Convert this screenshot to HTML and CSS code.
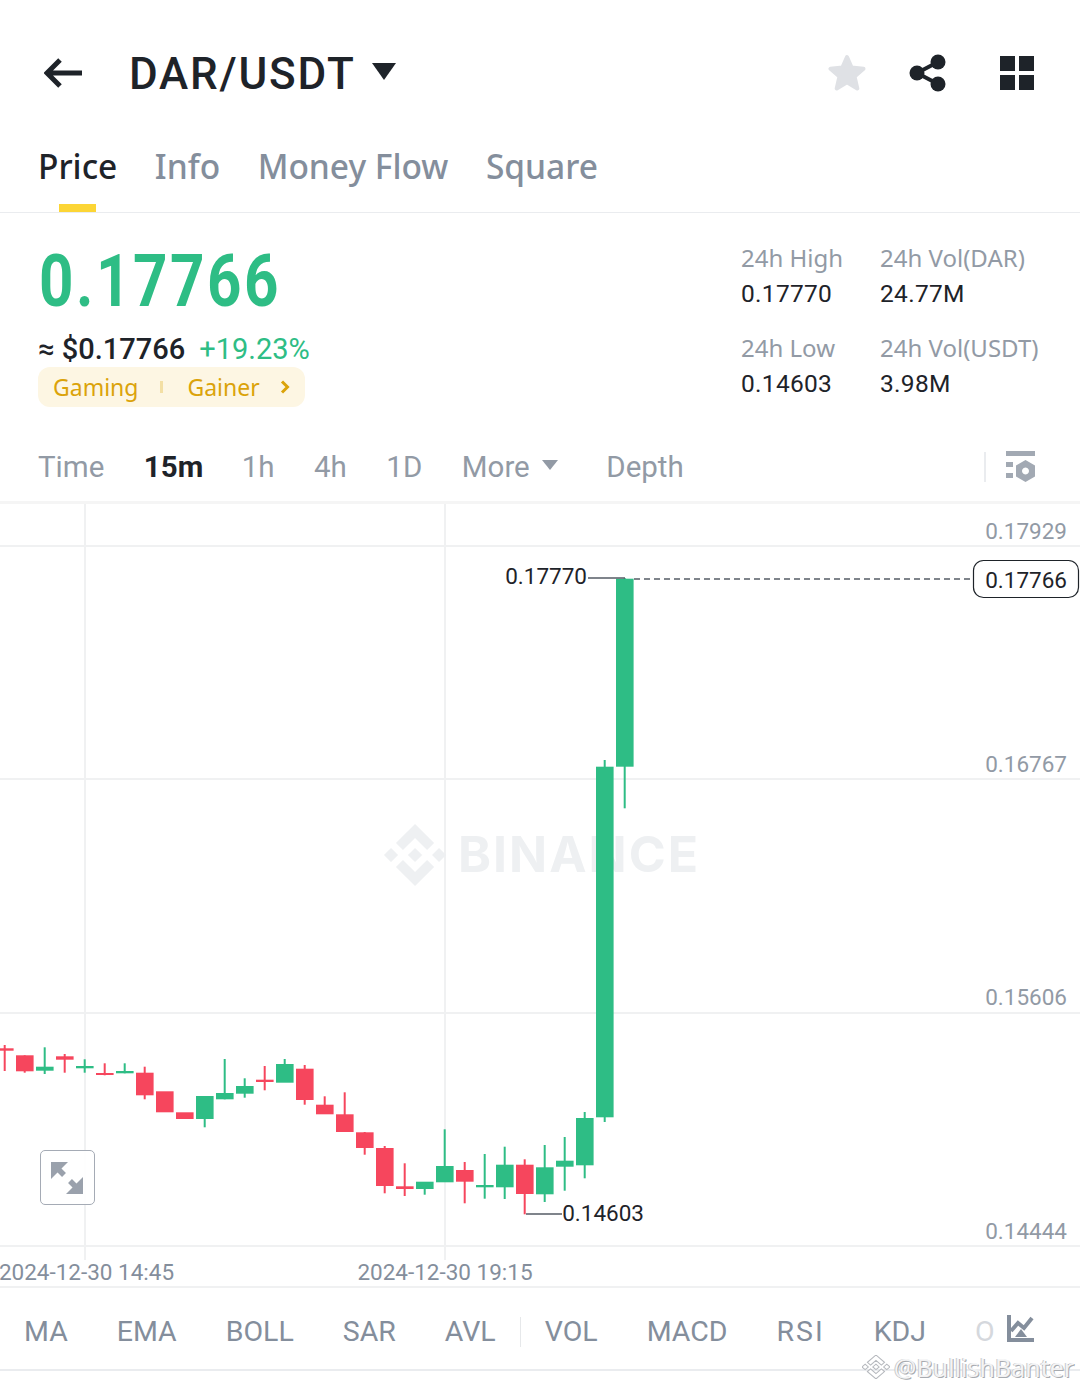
FILE: index.html

```html
<!DOCTYPE html>
<html lang="en">
<head>
  <meta charset="UTF-8" />
  <meta name="viewport" content="width=device-width, initial-scale=1.0"/>
  <title>DAR/USDT</title>
  <link rel="stylesheet" href="styles.css">
</head>
<body>

  <header class="topbar">
    <svg class="back-icon" width="38" height="30" viewBox="0 0 38 30"><path d="M16 2 L3 15 L16 28 M3 15 H38" /></svg>
    <h1 class="pair">DAR/USDT</h1>
    <span class="pair-caret"></span>
    <div class="topbar-actions">
      <svg width="38" height="38" viewBox="0 0 38 38"><path class="star" d="M19 3 L23.6 13.6 L35.5 14.8 L26.6 22.6 L29.3 34.5 L19 28.2 L8.7 34.5 L11.4 22.6 L2.5 14.8 L14.4 13.6 Z"/></svg>
      <svg width="38" height="40" viewBox="0 0 38 40" class="dark-icon share-icon"><path d="M29 9 L8 20 L29 31" fill="none" stroke="#1e2329" stroke-width="4"/><circle cx="29" cy="9" r="7.5"/><circle cx="8" cy="20" r="7.5"/><circle cx="29" cy="31" r="7.5"/></svg>
      <svg width="34" height="34" viewBox="0 0 34 34" class="dark-icon"><rect width="15" height="15"/><rect x="19" width="15" height="15"/><rect y="19" width="15" height="15"/><rect x="19" y="19" width="15" height="15"/></svg>
    </div>
  </header>

  <nav class="tabs">
    <a class="tab active">Price</a>
    <a class="tab">Info</a>
    <a class="tab">Money Flow</a>
    <a class="tab">Square</a>
  </nav>

  <section class="summary">
    <div class="summary-left">
      <div class="last-price">0.17766</div>
      <div class="sub-price">
        <span class="fiat">≈ $0.17766</span>
        <span class="change">+19.23%</span>
      </div>
      <div class="tags">
        <span>Gaming</span>
        <i class="tag-sep"></i>
        <span>Gainer</span>
        <svg width="10" height="14" viewBox="0 0 10 14"><path d="M2 1.5 L7.5 7 L2 12.5" fill="none" stroke="#dba30a" stroke-width="3"/></svg>
      </div>
    </div>
    <div class="stats">
      <div class="stat"><label>24h High</label><b>0.17770</b></div>
      <div class="stat"><label>24h Vol(DAR)</label><b>24.77M</b></div>
      <div class="stat"><label>24h Low</label><b>0.14603</b></div>
      <div class="stat"><label>24h Vol(USDT)</label><b>3.98M</b></div>
    </div>
  </section>

  <div class="intervals">
    <a>Time</a>
    <a class="current">15m</a>
    <a>1h</a>
    <a>4h</a>
    <a>1D</a>
    <a class="more">More<span class="more-caret"></span></a>
    <a class="depth">Depth</a>
    <i class="interval-sep"></i>
    <svg class="settings-icon" width="30" height="32" viewBox="0 0 30 32"><path d="M1 0h29v5H1zM1 11h7v5H1zM1 22h7v5H1z"/><path fill-rule="evenodd" d="M20.500 9 L30 14.500 V25.500 L20.500 31 L11 25.500 V14.500 Z M20.500 16.500 a3.500 3.500 0 1 0 .01 0 Z"/></svg>
  </div>

  <div class="chart">
    <!-- viewBox follows page coordinates, so candle y values read straight off the screen -->
    <svg class="chart-svg" width="1080" height="782" viewBox="0 504 1080 782">
      <g class="grid">
        <path d="M85 504V1260M445 504V1260M0 546H1080M0 779H1080M0 1013H1080M0 1246H1080"/>
      </g>

      <g class="watermark">
        <path transform="translate(384 824) scale(.49)" d="M38.730 53.200l24.590-24.580 24.600 24.600 14.300-14.310L63.320 0 24.430 38.900zM0 63.310l14.300-14.310 14.310 14.300-14.310 14.320zM38.730 73.410L63.320 98l24.600-24.600 14.310 14.290-38.900 38.910-38.910-38.880-.02-.02zM98 63.310l14.300-14.310 14.310 14.300-14.310 14.320zM77.830 63.300L63.320 48.780 52.590 59.510l-1.240 1.230-2.540 2.540 14.510 14.500 14.510-14.470z"/>
        <text x="458" y="872" class="watermark-text">BINANCE</text>
      </g>

      <g class="down">
        <rect x="3.700" y="1045" width="2" height="26"/><rect x="-4" y="1048.300" width="17.600" height="2.400"/>
        <rect x="23.700" y="1055.300" width="2" height="17.400"/><rect x="16" y="1055.300" width="17.600" height="16"/>
        <rect x="63.700" y="1054" width="2" height="18.700"/><rect x="56" y="1056.300" width="17.600" height="3.400"/>
        <rect x="103.700" y="1063.300" width="2" height="12"/><rect x="96" y="1073" width="17.600" height="2"/>
        <rect x="143.700" y="1066.700" width="2" height="32.600"/><rect x="136" y="1072.700" width="17.600" height="22.600"/>
        <rect x="156" y="1091.300" width="17.600" height="21"/>
        <rect x="176" y="1112.300" width="17.600" height="6.700"/>
        <rect x="263.700" y="1066" width="2" height="24.300"/><rect x="256" y="1079.700" width="17.600" height="2.300"/>
        <rect x="303.700" y="1065" width="2" height="39.700"/><rect x="296" y="1068.700" width="17.600" height="31.300"/>
        <rect x="323.700" y="1096.300" width="2" height="10"/><rect x="316" y="1104.700" width="17.600" height="9.600"/>
        <rect x="343.700" y="1092.300" width="2" height="24"/><rect x="336" y="1114.300" width="17.600" height="17.700"/>
        <rect x="363.700" y="1132" width="2" height="22.700"/><rect x="356" y="1132.300" width="17.600" height="15.700"/>
        <rect x="383.700" y="1146" width="2" height="47.300"/><rect x="376" y="1148" width="17.600" height="38"/>
        <rect x="403.700" y="1163.300" width="2" height="32.700"/><rect x="396" y="1186.300" width="17.600" height="2.700"/>
        <rect x="463.700" y="1162" width="2" height="41.300"/><rect x="456" y="1170" width="17.600" height="11.700"/>
        <rect x="523.700" y="1159.300" width="2" height="55"/><rect x="516" y="1164.700" width="17.600" height="29.300"/>
      </g>
      <g class="up">
        <rect x="43.700" y="1047.300" width="2" height="26.700"/><rect x="36" y="1066.700" width="17.600" height="4"/>
        <rect x="83.700" y="1059.300" width="2" height="13.400"/><rect x="76" y="1066" width="17.600" height="2.300"/>
        <rect x="123.700" y="1063.300" width="2" height="10"/><rect x="116" y="1071" width="17.600" height="2.300"/>
        <rect x="203.700" y="1096" width="2" height="31.300"/><rect x="196" y="1096" width="17.600" height="23"/>
        <rect x="223.700" y="1059" width="2" height="40.300"/><rect x="216" y="1093" width="17.600" height="6.300"/>
        <rect x="243.700" y="1078.300" width="2" height="19.400"/><rect x="236" y="1086" width="17.600" height="7.700"/>
        <rect x="283.700" y="1059" width="2" height="10"/><rect x="276" y="1064" width="17.600" height="18.700"/>
        <rect x="423.700" y="1182" width="2" height="12.700"/><rect x="416" y="1181.700" width="17.600" height="7.300"/>
        <rect x="443.700" y="1129.300" width="2" height="40"/><rect x="436" y="1166" width="17.600" height="16.300"/>
        <rect x="483.700" y="1154" width="2" height="44.700"/><rect x="476" y="1185" width="17.600" height="2.300"/>
        <rect x="503.700" y="1146.700" width="2" height="52.300"/><rect x="496" y="1164.700" width="17.600" height="22.600"/>
        <rect x="543.700" y="1145" width="2" height="57"/><rect x="536" y="1167.300" width="17.600" height="27"/>
        <rect x="563.700" y="1137" width="2" height="53.700"/><rect x="556" y="1160.700" width="17.600" height="6"/>
        <rect x="583.700" y="1112" width="2" height="66.300"/><rect x="576" y="1118" width="17.600" height="47.300"/>
        <rect x="603.700" y="760" width="2" height="362"/><rect x="596" y="766.700" width="17.600" height="350.600"/>
        <rect x="623.700" y="578" width="2" height="230.300"/><rect x="616" y="578.700" width="17.600" height="188"/>
      </g>

      <path class="marker" d="M588 578H625M526 1214H562"/>
      <path class="last-line" d="M634 579H970"/>
      <rect class="last-box" x="973.500" y="560.500" width="105" height="37" rx="10"/>

      <text class="axis" x="1067" y="539">0.17929</text>
      <text class="axis" x="1067" y="772">0.16767</text>
      <text class="axis" x="1067" y="1005">0.15606</text>
      <text class="axis" x="1067" y="1239">0.14444</text>
      <text class="axis dark" x="1067" y="588">0.17766</text>
      <text class="extreme" x="587" y="584">0.17770</text>
      <text class="extreme" x="644" y="1221">0.14603</text>
      <text class="date" x="86.500" y="1280">2024-12-30 14:45</text>
      <text class="date" x="445" y="1280">2024-12-30 19:15</text>
    </svg>

    <button class="expand">
      <svg width="53" height="53" viewBox="0 0 53 53"><path d="M10 11h17L10 28zM42 43H25l17-17z"/><path d="M15 16 L23 24 M29 30 L37 38" stroke="#9aa1ac" stroke-width="5.500"/></svg>
    </button>
  </div>

  <div class="indicators">
    <div class="indicator-list">
      <a>MA</a>
      <a>EMA</a>
      <a>BOLL</a>
      <a>SAR</a>
      <a class="last-main">AVL</a>
      <a>VOL</a>
      <a>MACD</a>
      <a class="rsi">RSI</a>
      <a>KDJ</a>
      <a class="faded">O</a>
    </div>
    <svg class="trend-icon" width="27" height="27" viewBox="0 0 27 27"><path d="M2 0V25H27" fill="none" stroke="#848e9c" stroke-width="4"/><path d="M4 16 L11 8 L17 13 L25 3" fill="none" stroke="#848e9c" stroke-width="4"/><path d="M8 22 L14 14 L20 22Z" fill="#848e9c"/></svg>
  </div>

  <div class="credit">
    <svg width="28" height="24" viewBox="0 0 127 127" preserveAspectRatio="none"><path d="M38.730 53.200l24.590-24.580 24.600 24.600 14.300-14.310L63.320 0 24.430 38.900zM0 63.310l14.300-14.310 14.310 14.300-14.310 14.320zM38.730 73.410L63.320 98l24.600-24.600 14.310 14.290-38.900 38.910-38.910-38.880-.02-.02zM98 63.310l14.300-14.310 14.310 14.300-14.310 14.320zM77.830 63.300L63.320 48.780 52.590 59.510l-1.240 1.230-2.540 2.540 14.510 14.500 14.510-14.470z"/></svg>
    <span>@BullishBanter</span>
  </div>

</body>
</html>
```

FILE: styles.css

```css
html, body {
  height: 1390px;
  overflow: hidden;
}

body {
  margin: 0;
  position: relative;
  background: #fff;
  color: #1e2329;
  font-family: "Noto Sans", sans-serif;
}

/* header */
.topbar {
  display: flex;
  align-items: center;
  height: 130px;
  padding: 16px 46px 0 44px;
  box-sizing: border-box;
}

.back-icon path {
  fill: none;
  stroke: #1e2329;
  stroke-width: 5;
}

.pair {
  margin: 2px 0 0 47px;
  font: 500 44px "Roboto", sans-serif;
  letter-spacing: 1.800px;
}

.pair-caret {
  margin: 0 0 3px 16px;
  border-left: 12.500px solid transparent;
  border-right: 12.500px solid transparent;
  border-top: 17px solid #1e2329;
}

.topbar-actions {
  display: flex;
  align-items: center;
  gap: 43px;
  margin-left: auto;
}

.share-icon { margin-right: 10px; }

.star {
  fill: #dfe1e5;
  stroke: #dfe1e5;
  stroke-width: 4;
  stroke-linejoin: round;
}

.dark-icon { fill: #1e2329; }

/* tabs */
.tabs {
  display: flex;
  gap: 37.500px;
  height: 83px;
  padding-left: 38px;
  box-sizing: border-box;
  border-bottom: 1px solid #eaecef;
}

.tab {
  position: relative;
  font-size: 33.500px;
  line-height: 72px;
  font-weight: 500;
  color: #848e9c;
}

.tab.active { color: #1e2329; }

.tab.active::after {
  content: "";
  position: absolute;
  left: 21px;
  bottom: 0;
  width: 37px;
  height: 8px;
  background: #fcd535;
}

/* price block */
.summary {
  display: flex;
  justify-content: space-between;
  height: 215px;
  padding: 0 39px 0 38px;
  box-sizing: border-box;
}

/* DIN-like narrow digits, no such face is installed */
.last-price {
  margin: 29px 0 0 1px;
  font: 700 72px/80px "Roboto", sans-serif;
  letter-spacing: 3px;
  color: #2ebd85;
  transform: scaleX(0.835);
  transform-origin: left center;
}

.sub-price {
  display: flex;
  gap: 14px;
  margin-top: 7px;
  font: 500 29px/40px "Roboto", sans-serif;
}

.change { color: #2ebd85; font-weight: 400; }

.tags {
  display: inline-flex;
  align-items: center;
  height: 40px;
  margin-top: -2px;
  padding: 0 15px;
  border-radius: 12px;
  background: #fdf6e3;
  color: #dba30a;
  font-size: 23px;
}

.tag-sep {
  width: 3px;
  height: 12px;
  margin: 0 24px 0 22px;
  background: #f3dfa4;
}

.tags svg { margin-left: 20px; }

.stats {
  display: grid;
  grid-template-columns: 139px 161px;
  align-content: start;
  row-gap: 19px;
  padding-top: 27px;
}

.stat label {
  display: block;
  font-size: 24px;
  line-height: 36px;
  color: #929aa5;
  white-space: nowrap;
}

.stat b {
  display: block;
  margin-top: 1px;
  font: 400 24.500px/34px "Roboto", sans-serif;
  letter-spacing: 0.300px;
}

/* interval row */
.intervals {
  display: flex;
  align-items: center;
  gap: 39.500px;
  height: 76px;
  padding: 2px 45px 0 38px;
  box-sizing: border-box;
  font: 400 29.500px "Roboto", sans-serif;
  color: #929aa5;
}

.current {
  margin-right: -1px;
  font-weight: 700;
  color: #1e2329;
}

.more {
  display: flex;
  align-items: center;
}

.more-caret {
  margin: 0 0 4px 12px;
  border-left: 8px solid transparent;
  border-right: 8px solid transparent;
  border-top: 10px solid #929aa5;
}

.depth { margin-left: 9px; }

.interval-sep {
  width: 2px;
  height: 30px;
  margin-left: auto;
  margin-right: -20px;
  background: #eaecef;
}

.settings-icon { fill: #a2a9b3; }

/* chart */
.chart {
  height: 782px;
  border-top: 3px solid #f5f5f5;
  margin-top: -3px;
  position: relative;
}

.chart-svg { display: block; }

.grid path {
  stroke: #f0f1f2;
  stroke-width: 2;
  fill: none;
}

.watermark { fill: #eef0f2; }

.watermark-text {
  font: 700 50px "Inter", sans-serif;
  letter-spacing: 2px;
}

.up rect { fill: #2ebd85; }
.down rect { fill: #f6465d; }

.marker {
  stroke: #555c66;
  stroke-width: 1.5;
  fill: none;
}

.last-line {
  stroke: #555c66;
  stroke-width: 1.5;
  stroke-dasharray: 6 4;
}

.last-box {
  fill: #fff;
  stroke: #1e2329;
  stroke-width: 1.2;
}

.axis {
  font: 400 22.500px "Roboto", sans-serif;
  fill: #929aa5;
  text-anchor: end;
}

.axis.dark { fill: #1e2329; }

.extreme {
  font: 400 22.500px "Roboto", sans-serif;
  fill: #1e2329;
  text-anchor: end;
}

.date {
  font: 400 22.500px "Roboto", sans-serif;
  fill: #848e9c;
  text-anchor: middle;
}

.expand {
  position: absolute;
  left: 40px;
  top: 646px;
  width: 55px;
  height: 55px;
  padding: 0;
  border: 1.5px solid #a5abb5;
  border-radius: 5px;
  background: rgba(255, 255, 255, 0.9);
}

.expand svg {
  display: block;
  fill: #9aa1ac;
}

/* indicator row */
.indicators {
  position: relative;
  height: 85px;
  box-sizing: border-box;
  border-top: 2px solid #f0f1f2;
  border-bottom: 2px solid #eaecef;
}

.indicator-list {
  display: flex;
  align-items: center;
  gap: 49px;
  height: 81px;
  box-sizing: border-box;
  padding: 5px 0 0 24px;
  font: 400 28.500px "Roboto", sans-serif;
  color: #848e9c;
}

.last-main { position: relative; }

.last-main::after {
  content: "";
  position: absolute;
  right: -25px;
  top: 2px;
  width: 1px;
  height: 30px;
  background: #e6e8ea;
}

.rsi { letter-spacing: 2px; }

.faded { color: #d5d8dd; }

.trend-icon {
  position: absolute;
  left: 1007px;
  top: 27px;
}

/* image credit stamped on the screenshot */
.credit {
  position: absolute;
  left: 862px;
  top: 1352px;
  display: flex;
  align-items: center;
  gap: 4px;
}

.credit svg {
  fill: #fff;
  stroke: #b5b8bd;
  stroke-width: 5;
}

.credit span {
  font-size: 25px;
  line-height: 30px;
  color: rgba(255, 255, 255, 0.85);
  text-shadow: 1px 1px 0 #a8abb0, -1px 0 0 #c8cacd;
}
```
